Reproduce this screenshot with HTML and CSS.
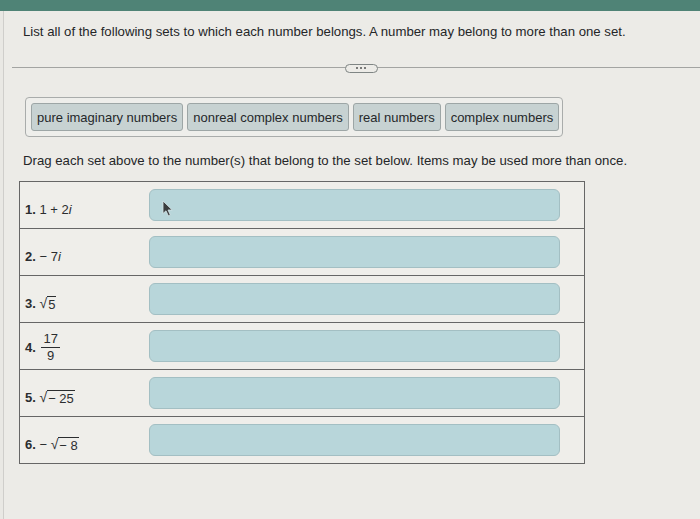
FILE: index.html
```html
<!DOCTYPE html>
<html>
<head>
<meta charset="utf-8">
<link rel="stylesheet" href="styles.css">
</head>
<body>
<div class="topbar"></div>
<div class="page">
  <p class="question">List all of the following sets to which each number belongs. A number may belong to more than one set.</p>
  <div class="divider">
    <span class="line"></span>
    <span class="more"><i></i><i></i><i></i></span>
  </div>
  <div class="tiles">
    <span class="tile">pure imaginary numbers</span>
    <span class="tile">nonreal complex numbers</span>
    <span class="tile">real numbers</span>
    <span class="tile">complex numbers</span>
  </div>
  <p class="instr">Drag each set above to the number(s) that belong to the set below. Items may be used more than once.</p>
  <div class="table">
    <div class="row">
      <div class="label"><b>1.</b>&nbsp;1 + 2<i>i</i></div>
      <div class="cell"><div class="drop">
        <svg class="cursor" width="12" height="17" viewBox="0 0 12 17"><path d="M1 1 L1 13.5 L4 10.8 L6.3 15.8 L8.3 14.9 L6 10 L10.2 10 Z" fill="#3a3d3e" stroke="#d8e6e8" stroke-width="0.8"/></svg>
      </div></div>
    </div>
    <div class="row">
      <div class="label"><b>2.</b>&nbsp;&minus; 7<i>i</i></div>
      <div class="cell"><div class="drop"></div></div>
    </div>
    <div class="row">
      <div class="label"><b>3.</b>&nbsp;<span class="rad">√</span><span class="under">5</span></div>
      <div class="cell"><div class="drop"></div></div>
    </div>
    <div class="row">
      <div class="label frow"><b>4.</b>&nbsp;<span class="frac"><span class="num">17</span><span class="den">9</span></span></div>
      <div class="cell"><div class="drop"></div></div>
    </div>
    <div class="row">
      <div class="label"><b>5.</b>&nbsp;<span class="rad">√</span><span class="under">&minus; 25</span></div>
      <div class="cell"><div class="drop"></div></div>
    </div>
    <div class="row">
      <div class="label"><b>6.</b>&nbsp;&minus;&nbsp;<span class="rad">√</span><span class="under">&minus; 8</span></div>
      <div class="cell"><div class="drop"></div></div>
    </div>
  </div>
</div>
</body>
</html>
```
FILE: styles.css
```css
* { box-sizing: border-box; }
html, body {
  margin: 0;
  padding: 0;
  background: #e9e8e4;
  font-family: "Liberation Sans", Arial, sans-serif;
  color: #242628;
}
.topbar {
  height: 11px;
  background: #4f8376;
}
.page {
  margin-left: 3px;
  border-left: 1px solid #cfcecb;
  height: 508px;
  background: #ecebe7;
  padding-top: 13px;
}
.question {
  margin: 0 0 0 19px;
  font-size: 13.2px;
  line-height: 16px;
}
.divider {
  position: relative;
  margin: 23px 0 0 8px;
  height: 10px;
  display: flex;
  align-items: center;
  justify-content: center;
}
.divider .line {
  position: absolute;
  left: 0;
  right: 0;
  top: 4px;
  border-top: 1px solid #a3a4a2;
}
.more {
  position: relative;
  width: 33px;
  height: 9px;
  border: 1px solid #7f8584;
  border-radius: 5px;
  background: #ecebe7;
  display: flex;
  gap: 2px;
  align-items: center;
  justify-content: center;
  margin-left: 10px;
}
.more i {
  width: 2px;
  height: 2px;
  background: #555;
  border-radius: 1px;
}
.tiles {
  margin: 24px 0 0 21px;
  width: 538px;
  height: 40px;
  border: 1px solid #a9acab;
  border-radius: 4px;
  background: #eeeeeb;
  display: flex;
  align-items: center;
  gap: 4px;
  padding: 0 5px;
}
.tile {
  flex-shrink: 0;
  white-space: nowrap;
  height: 28px;
  display: flex;
  align-items: center;
  padding: 0 5px;
  background: #c7d2d2;
  border: 1px solid #9da6a6;
  border-radius: 3px;
  font-size: 13px;
  color: #25282a;
}
.instr {
  margin: 16px 0 0 19px;
  font-size: 13.2px;
  line-height: 16px;
}
.table {
  margin: 12px 0 0 15px;
  width: 566px;
  border: 1px solid #666;
  border-bottom: none;
  background: #efeeea;
}
.row {
  display: flex;
  height: 47px;
  border-bottom: 1px solid #666;
}
.label {
  width: 129px;
  display: flex;
  align-items: center;
  padding: 8px 0 0 5px;
  font-size: 13px;
  color: #2b2d2f;
  white-space: nowrap;
}
.label.frow { padding-top: 2px; }
.label b { font-weight: bold; }
.label i { font-style: italic; }
.cell {
  flex: 1;
  display: flex;
  align-items: center;
  padding-right: 24px;
}
.drop {
  position: relative;
  width: 100%;
  height: 32px;
  background: #b8d6da;
  border: 1px solid #a3bfc3;
  border-radius: 6px;
}
.cursor {
  position: absolute;
  left: 12px;
  top: 10px;
}
.rad {
  font-size: 14px;
}
.under {
  border-top: 1px solid #2b2d2f;
  padding: 1px 1px 0 1px;
  line-height: 13px;
}
.frac {
  display: inline-flex;
  flex-direction: column;
  align-items: center;
  line-height: 14px;
  margin-left: 2px;
}
.frac .num {
  border-bottom: 1px solid #2b2d2f;
  padding: 0 2px 1px;
}
.frac .den {
  padding-top: 1px;
}
```
